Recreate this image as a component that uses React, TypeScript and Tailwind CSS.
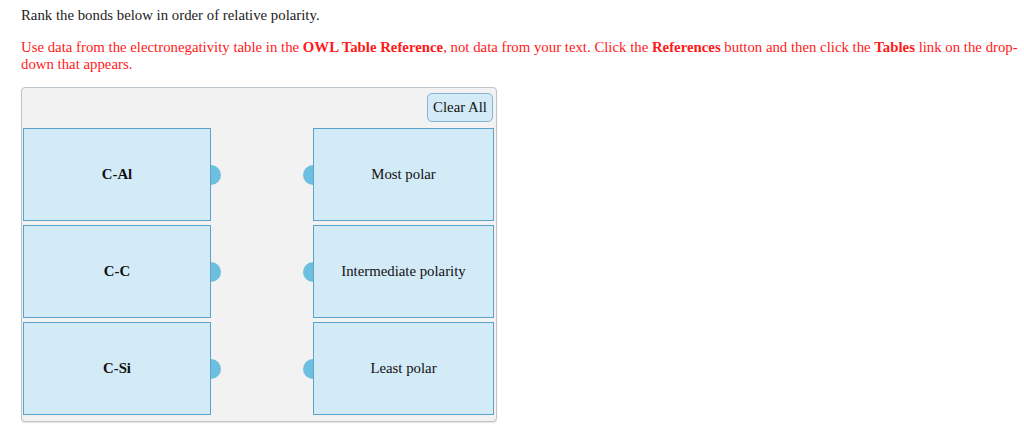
import React from "react";

type Row = { left: string; right: string };

const rows: Row[] = [
  { left: "C-Al", right: "Most polar" },
  { left: "C-C", right: "Intermediate polarity" },
  { left: "C-Si", right: "Least polar" },
];

const App: React.FC = () => {
  return (
    <div
      className="min-h-[432px] bg-white pl-[21px] pt-[7px] text-[14.8px] text-[#222]"
      style={{ fontFamily: '"Liberation Serif", "Times New Roman", serif' }}
    >
      <p className="leading-[17px]">Rank the bonds below in order of relative polarity.</p>

      <p className="mt-[15px] w-[1003px] leading-[17px] text-[#ff1a1a]">
        Use data from the electronegativity table in the <b>OWL Table Reference</b>, not data from
        your text. Click the <b>References</b> button and then click the <b>Tables</b> link on the
        drop-down that appears.
      </p>

      <div className="mt-[14px] w-[476px] rounded-[4px] border border-[#bcc4cc] bg-[#f2f2f2] pb-[6px] pl-[1px] pr-[2px] pt-[5px] shadow-[0_1px_1px_rgba(0,0,0,0.12)]">
        <div className="flex justify-end pr-[1px]">
          <button className="h-[29px] w-[66px] rounded-[5px] border border-[#84b4d2] bg-[#d3eaf7] text-[14.8px] text-[#111]">
            Clear All
          </button>
        </div>

        <div className="mt-[6px] flex flex-col gap-[4px]">
          {rows.map((row) => (
            <div key={row.left} className="flex justify-between">
              <div className="relative flex h-[93px] w-[188px] items-center justify-center border border-[#5ba3cc] bg-[#d3eaf7] font-bold text-[#111]">
                {row.left}
                <span className="absolute right-[-11px] top-1/2 h-[20px] w-[10px] -translate-y-1/2 rounded-r-full bg-[#6dbfe0]" />
              </div>
              <div className="relative flex h-[93px] w-[181px] items-center justify-center border border-[#5ba3cc] bg-[#d3eaf7] text-[#111]">
                {row.right}
                <span className="absolute left-[-11px] top-1/2 h-[20px] w-[10px] -translate-y-1/2 rounded-l-full bg-[#6dbfe0]" />
              </div>
            </div>
          ))}
        </div>
      </div>
    </div>
  );
};

export default App;
